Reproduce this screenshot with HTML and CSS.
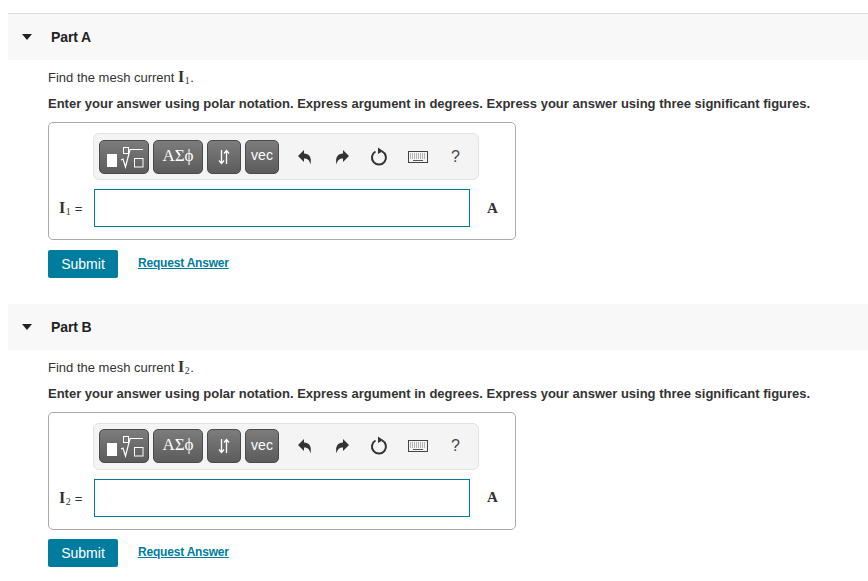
FILE: index.html
```html
<!DOCTYPE html>
<html lang="en">
<head>
<meta charset="UTF-8">
<title>Mesh current</title>
<link rel="stylesheet" href="styles.css">
</head>
<body>

<div class="rule"></div>

<!-- Part A -->
<section class="part">
  <div class="part-head"><span class="caret"></span><h2>Part A</h2></div>
  <div class="part-body">
    <p class="line">Find the mesh current <b class="sym">I<sub>1</sub></b>.</p>
    <p class="line strong">Enter your answer using polar notation. Express argument in degrees. Express your answer using three significant figures.</p>
    <div class="answer-box">
      <div class="toolbar">
        <div class="tb-btns">
          <span class="tb-btn tb-templates">
            <svg width="46" height="28" viewBox="0 0 46 28"><rect x="6" y="11" width="10" height="13" fill="#fff"/><rect x="22.500" y="4.500" width="5" height="6" fill="none" stroke="#fff"/><path d="M20 17l2-1 2.500 8L29 6.500h13" fill="none" stroke="#fff" stroke-width="1.200"/><rect x="33.500" y="15.500" width="8.500" height="8.500" fill="none" stroke="#fff"/></svg>
          </span>
          <span class="tb-btn tb-greek">ΑΣϕ</span>
          <span class="tb-btn tb-arrows">
            <svg width="14" height="16" viewBox="0 0 14 16"><path d="M4.500 1v13M2 11.500l2.500 3 2.500-3M9.500 15V2M7 4.500l2.500-3 2.500 3" fill="none" stroke="#fff" stroke-width="1.300"/></svg>
          </span>
          <span class="tb-btn tb-vec">vec</span>
        </div>
        <div class="tb-icons">
          <svg class="ic" width="16" height="16" viewBox="0 0 16 16"><path d="M0 7l6-6v3.500c5 0 8 3.500 6.500 11-1-4.500-3-6-6.500-6V13z" fill="#333"/></svg>
          <svg class="ic" width="16" height="16" viewBox="0 0 16 16"><path d="M15 7L9 1v3.500c-5 0-8 3.500-6.500 11 1-4.500 3-6 6.500-6V13z" fill="#333"/></svg>
          <svg class="ic" width="18" height="20" viewBox="0 0 18 20"><path d="M5.500 4.500a7 7 0 1 0 6.500-.2" fill="none" stroke="#333" stroke-width="2"/><path d="M8 .5l5 3.500-5 3z" fill="#333"/></svg>
          <svg class="ic" width="20" height="12" viewBox="0 0 20 12"><rect x=".5" y=".5" width="19" height="11" fill="#f4f4f4" stroke="#444"/><path d="M2 3h16M2 5h16M2 7h16" stroke="#777" stroke-dasharray="1 1"/><path d="M5 9.500h10" stroke="#555"/></svg>
          <span class="ic-help">?</span>
        </div>
      </div>
      <div class="input-row">
        <label class="var"><b class="sym">I<sub>1</sub></b> =</label>
        <div class="input"></div>
        <span class="unit">A</span>
      </div>
    </div>
    <div class="actions">
      <button class="submit" type="button">Submit</button>
      <a class="request" href="#">Request Answer</a>
    </div>
  </div>
</section>

<!-- Part B -->
<section class="part">
  <div class="part-head"><span class="caret"></span><h2>Part B</h2></div>
  <div class="part-body">
    <p class="line">Find the mesh current <b class="sym">I<sub>2</sub></b>.</p>
    <p class="line strong">Enter your answer using polar notation. Express argument in degrees. Express your answer using three significant figures.</p>
    <div class="answer-box">
      <div class="toolbar">
        <div class="tb-btns">
          <span class="tb-btn tb-templates">
            <svg width="46" height="28" viewBox="0 0 46 28"><rect x="6" y="11" width="10" height="13" fill="#fff"/><rect x="22.500" y="4.500" width="5" height="6" fill="none" stroke="#fff"/><path d="M20 17l2-1 2.500 8L29 6.500h13" fill="none" stroke="#fff" stroke-width="1.200"/><rect x="33.500" y="15.500" width="8.500" height="8.500" fill="none" stroke="#fff"/></svg>
          </span>
          <span class="tb-btn tb-greek">ΑΣϕ</span>
          <span class="tb-btn tb-arrows">
            <svg width="14" height="16" viewBox="0 0 14 16"><path d="M4.500 1v13M2 11.500l2.500 3 2.500-3M9.500 15V2M7 4.500l2.500-3 2.500 3" fill="none" stroke="#fff" stroke-width="1.300"/></svg>
          </span>
          <span class="tb-btn tb-vec">vec</span>
        </div>
        <div class="tb-icons">
          <svg class="ic" width="16" height="16" viewBox="0 0 16 16"><path d="M0 7l6-6v3.500c5 0 8 3.500 6.500 11-1-4.500-3-6-6.500-6V13z" fill="#333"/></svg>
          <svg class="ic" width="16" height="16" viewBox="0 0 16 16"><path d="M15 7L9 1v3.500c-5 0-8 3.500-6.500 11 1-4.500 3-6 6.500-6V13z" fill="#333"/></svg>
          <svg class="ic" width="18" height="20" viewBox="0 0 18 20"><path d="M5.500 4.500a7 7 0 1 0 6.500-.2" fill="none" stroke="#333" stroke-width="2"/><path d="M8 .5l5 3.500-5 3z" fill="#333"/></svg>
          <svg class="ic" width="20" height="12" viewBox="0 0 20 12"><rect x=".5" y=".5" width="19" height="11" fill="#f4f4f4" stroke="#444"/><path d="M2 3h16M2 5h16M2 7h16" stroke="#777" stroke-dasharray="1 1"/><path d="M5 9.500h10" stroke="#555"/></svg>
          <span class="ic-help">?</span>
        </div>
      </div>
      <div class="input-row">
        <label class="var"><b class="sym">I<sub>2</sub></b> =</label>
        <div class="input"></div>
        <span class="unit">A</span>
      </div>
    </div>
    <div class="actions">
      <button class="submit" type="button">Submit</button>
      <a class="request" href="#">Request Answer</a>
    </div>
  </div>
</section>

</body>
</html>
```

FILE: styles.css
```css
body { margin: 0; padding: 13px 0 0 8px; font-family: "Liberation Sans", Arial, sans-serif; font-size: 13px; color: #333; background: #fff; overflow: hidden; }
.rule { height: 1px; background: #ddd; }
.part { height: 289.6px; }
.part-head { display: flex; align-items: center; height: 46px; background: #f8f8f8; }
.part-head h2 { margin: 0; font-size: 14px; font-weight: bold; letter-spacing: -0.1px; color: #222; }
.caret { width: 0; height: 0; margin: 0 19px 0 14px; border-left: 5.500px solid transparent; border-right: 5.500px solid transparent; border-top: 6px solid #222; }
.part-body { padding: 0 0 0 40px; }
.line { margin: 0; height: 26px; line-height: 26px; white-space: nowrap; }
.line:first-child { margin-top: 4px; }
.strong { font-weight: bold; line-height: 28px; }
.sym { font-family: "Liberation Serif", serif; font-size: 16px; font-weight: bold; letter-spacing: 0.5px; }
.sym sub { font-size: 10px; font-weight: normal; line-height: 0; vertical-align: -2px; }
.answer-box { box-sizing: border-box; width: 468px; height: 118px; margin-top: 6px; padding: 10px 0 0 44px; border: 1px solid #aaa; border-radius: 5px; }
.toolbar { box-sizing: border-box; display: flex; align-items: center; justify-content: space-between; width: 386px; height: 47px; padding: 0 18px 0 5px; background: #f4f4f4; border: 1px solid #e2e2e2; border-radius: 6px; }
.tb-btns { display: flex; gap: 4px; }
.tb-btn { box-sizing: border-box; display: flex; align-items: center; justify-content: center; height: 34px; border: 1px solid #4a4a4a; border-radius: 5px; background: linear-gradient(#7c7c7c, #5c5c5c); color: #fff; }
.tb-templates { width: 50px; }
.tb-greek { width: 50px; padding-bottom: 2px; font-family: "Liberation Serif", serif; font-size: 17px; }
.tb-arrows { width: 34px; }
.tb-vec { width: 34px; padding-bottom: 3px; font-size: 14px; }
.tb-icons { display: flex; align-items: center; gap: 20px; }
.ic-help { font-size: 16px; color: #444; margin-left: 3px; }
.input-row { display: flex; align-items: center; margin-top: 9px; }
.var { width: 0; white-space: nowrap; transform: translateX(-34px); font-size: 13px; }
.input { box-sizing: border-box; width: 376px; height: 38px; margin-left: 1px; border: 1px solid #007c9e; background: #fff; }
.unit { margin-left: 17px; font-family: "Liberation Serif", serif; font-weight: bold; font-size: 15px; }
.actions { display: flex; align-items: center; gap: 20px; margin-top: 9.800px; }
.submit { width: 70px; height: 28px; padding: 0; border: 0; border-radius: 2px; background: #007c9e; color: #fff; font: 14px "Liberation Sans", Arial, sans-serif; }
.request { position: relative; top: -1px; color: #007c9e; font-size: 12px; font-weight: bold; letter-spacing: -0.2px; }
```
